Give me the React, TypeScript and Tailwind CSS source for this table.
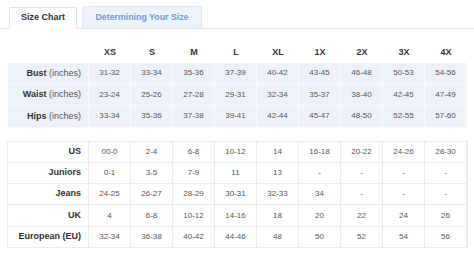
const sizes = ['XS', 'S', 'M', 'L', 'XL', '1X', '2X', '3X', '4X'];

const measurements = [
  { label: 'Bust', values: ['31-32', '33-34', '35-36', '37-39', '40-42', '43-45', '46-48', '50-53', '54-56'] },
  { label: 'Waist', values: ['23-24', '25-26', '27-28', '29-31', '32-34', '35-37', '38-40', '42-45', '47-49'] },
  { label: 'Hips', values: ['33-34', '35-36', '37-38', '39-41', '42-44', '45-47', '48-50', '52-55', '57-60'] },
];

const conversions = [
  { label: 'US', values: ['00-0', '2-4', '6-8', '10-12', '14', '16-18', '20-22', '24-26', '28-30'] },
  { label: 'Juniors', values: ['0-1', '3-5', '7-9', '11', '13', '-', '-', '-', '-'] },
  { label: 'Jeans', values: ['24-25', '26-27', '28-29', '30-31', '32-33', '34', '-', '-', '-'] },
  { label: 'UK', values: ['4', '6-8', '10-12', '14-16', '18', '20', '22', '24', '26'] },
  { label: 'European (EU)', values: ['32-34', '36-38', '40-42', '44-46', '48', '50', '52', '54', '56'] },
];

export default function App() {
  return (
    <div
      className="w-[474px] h-[264px] bg-white overflow-hidden"
      style={{ fontFamily: '"Liberation Sans", Arial, sans-serif' }}
    >
      {/* tabs */}
      <div className="h-[29px] flex items-end gap-[5px] pl-[9px] border-b border-[#e4e4e4]">
        <div className="w-[68px] h-[22px] -mb-px flex items-center justify-center bg-white border border-[#e2e2e2] border-b-white rounded-t-[2px] text-[9px] font-bold text-[#333]">
          Size Chart
        </div>
        <div className="w-[120px] h-[22px] flex items-center justify-center bg-[#edf3fb] border border-b-0 border-[#dfe8f4] rounded-t-[2px] text-[8.8px] font-bold text-[#6f9bd6]">
          Determining Your Size
        </div>
      </div>

      {/* measurements */}
      <div className="ml-[8px] mt-[13px] w-[460px]">
        <div className="grid grid-cols-[81px_repeat(9,42px)] h-[21px] items-center text-[9px] font-bold text-[#333]">
          <div />
          {sizes.map((s) => (
            <div key={s} className="text-center">{s}</div>
          ))}
        </div>
        <div className="grid grid-cols-[80px_repeat(9,41px)] gap-px bg-[#f8fafd] p-px pl-0 pt-0">
          {measurements.map((row) => (
            <div key={row.label} className="contents">
              <div className="h-[20.5px] bg-[#edf2fa] flex items-center justify-end pr-[7px] text-[9px] text-[#555]">
                <span className="font-bold text-[#333]">{row.label}</span>&nbsp;(inches)
              </div>
              {row.values.map((v, i) => (
                <div key={i} className="h-[20.5px] bg-[#edf2fa] flex items-center justify-center text-[8px] text-[#555]">
                  {v}
                </div>
              ))}
            </div>
          ))}
        </div>
      </div>

      {/* conversions */}
      <div className="ml-[7px] mt-[13px] w-[461px] grid grid-cols-[80px_repeat(9,41px)] gap-px bg-[#ebebeb] p-px">
        {conversions.map((row) => (
          <div key={row.label} className="contents">
            <div className="h-[20.3px] bg-white flex items-center justify-end pr-[7px] text-[9px] font-bold text-[#333]">
              {row.label}
            </div>
            {row.values.map((v, i) => (
              <div key={i} className="h-[20.3px] bg-white flex items-center justify-center text-[8px] text-[#555]">
                {v}
              </div>
            ))}
          </div>
        ))}
      </div>
    </div>
  );
}
